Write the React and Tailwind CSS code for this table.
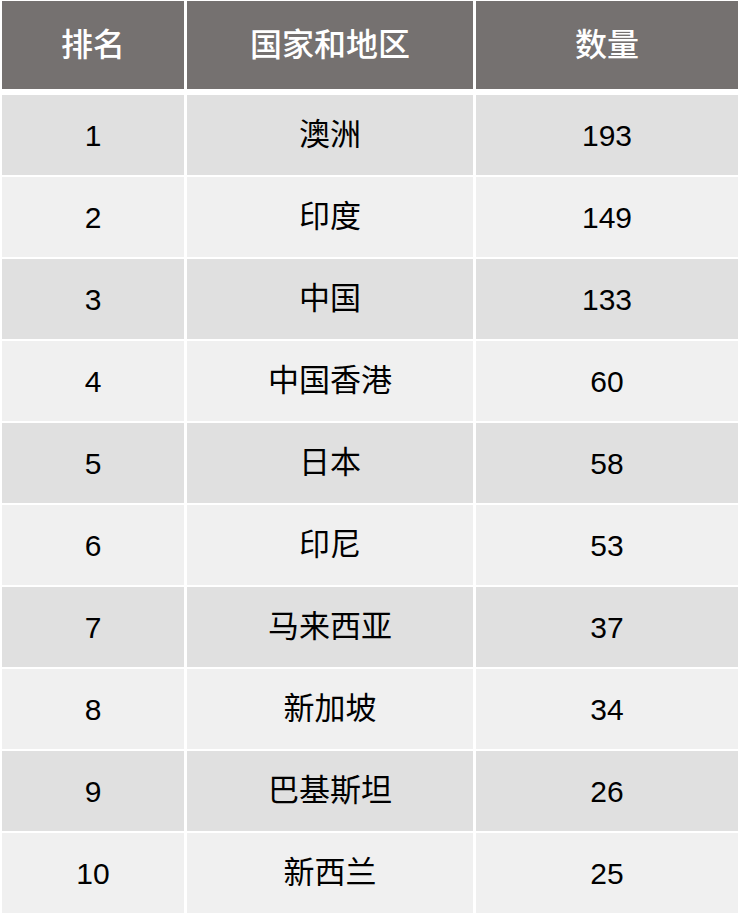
const ROWS = [
  ['1', '澳洲', '193'],
  ['2', '印度', '149'],
  ['3', '中国', '133'],
  ['4', '中国香港', '60'],
  ['5', '日本', '58'],
  ['6', '印尼', '53'],
  ['7', '马来西亚', '37'],
  ['8', '新加坡', '34'],
  ['9', '巴基斯坦', '26'],
  ['10', '新西兰', '25'],
]

const font = { fontFamily: '"Liberation Sans", "Noto Sans CJK SC", sans-serif' }

export default function App() {
  return (
    <div className="w-[741px] h-[918px] bg-white pl-[2px] pt-[1px]" style={font}>
      {/* Header */}
      <div className="grid grid-cols-[182px_286px_262px] gap-x-[3px] h-[88px] mb-[6px]">
        {['排名', '国家和地区', '数量'].map(h => (
          <div key={h} className="flex items-center justify-center bg-[#757170] text-white text-[32px] font-medium">
            {h}
          </div>
        ))}
      </div>

      {/* Body */}
      <div className="flex flex-col gap-y-[2px]">
        {ROWS.map((r, i) => (
          <div
            key={r[0]}
            className="grid grid-cols-[182px_286px_262px] gap-x-[3px] h-[80px]"
          >
            {r.map((c, j) => (
              <div
                key={j}
                className={`flex items-center justify-center text-black ${j === 1 ? 'text-[31px]' : 'text-[30px]'} ${
                  i % 2 === 0 ? 'bg-[#e0e0e0]' : 'bg-[#f0f0f0]'
                }`}
              >
                {c}
              </div>
            ))}
          </div>
        ))}
      </div>
    </div>
  )
}
